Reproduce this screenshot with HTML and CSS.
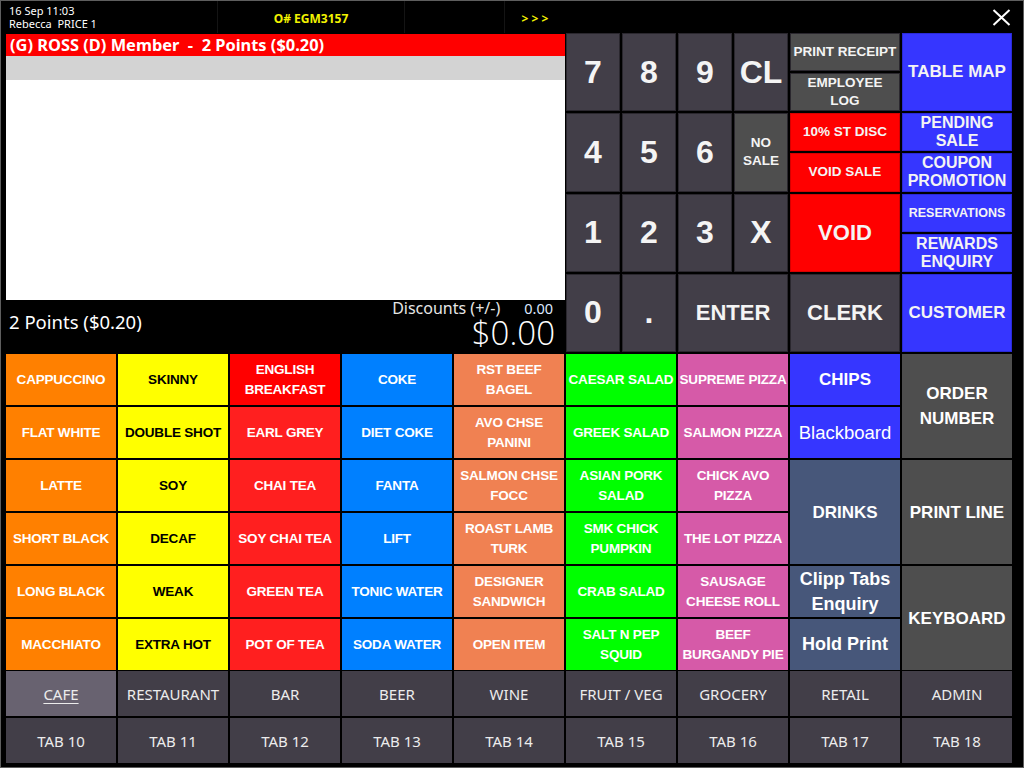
FILE: index.html
```html
<!DOCTYPE html>
<html lang="en">
<head>
  <meta charset="UTF-8">
  <meta name="viewport" content="width=device-width, initial-scale=1.0">
  <title>POS - Cafe</title>
  <link rel="stylesheet" href="styles.css">
</head>
<body>
  <div class="screen">

    <!-- status bar -->
    <div class="top">
      <div class="top-info">
        <div class="seg seg-user">
          <div>16 Sep 11:03</div>
          <div>Rebecca&nbsp; PRICE 1</div>
        </div>
        <div class="seg seg-order">O# EGM3157</div>
        <div class="seg seg-blank"></div>
        <div class="seg seg-more">&gt; &gt; &gt;</div>
      </div>
      <div class="close">
        <svg width="19" height="17" viewBox="0 0 19 17">
          <path d="M1.5 1 L17.5 16 M17.5 1 L1.5 16" stroke="#fff" stroke-width="2" fill="none"/>
        </svg>
      </div>
    </div>

    <div class="upper">
      <!-- sale panel -->
      <div class="receipt">
        <div class="member-bar">(G) ROSS (D) Member&nbsp; -&nbsp; 2 Points ($0.20)</div>
        <div class="receipt-head"></div>
        <div class="receipt-lines"></div>
        <div class="totals">
          <div class="points">2 Points ($0.20)</div>
          <div class="sum">
            <div class="disc"><span class="disc-label">Discounts (+/-)</span><span class="disc-val">0.00</span></div>
            <div class="total">$0.00</div>
          </div>
        </div>
      </div>

      <!-- keypad + functions -->
      <div class="keypad">
        <div class="key num tall">7</div>
        <div class="key num tall">8</div>
        <div class="key num tall">9</div>
        <div class="key num tall">CL</div>
        <div class="key grey small wide">PRINT RECEIPT</div>
        <div class="key blue big wide tall">TABLE MAP</div>
        <div class="key grey small wide">EMPLOYEE<br>LOG</div>

        <div class="key num tall">4</div>
        <div class="key num tall">5</div>
        <div class="key num tall">6</div>
        <div class="key grey small tall">NO<br>SALE</div>
        <div class="key red small wide">10% ST DISC</div>
        <div class="key blue mid wide">PENDING<br>SALE</div>
        <div class="key red small wide">VOID SALE</div>
        <div class="key blue mid wide">COUPON<br>PROMOTION</div>

        <div class="key num tall">1</div>
        <div class="key num tall">2</div>
        <div class="key num tall">3</div>
        <div class="key num tall">X</div>
        <div class="key red word wide tall">VOID</div>
        <div class="key blue tiny wide">RESERVATIONS</div>
        <div class="key blue mid wide">REWARDS<br>ENQUIRY</div>

        <div class="key num tall">0</div>
        <div class="key num tall">.</div>
        <div class="key word wide tall">ENTER</div>
        <div class="key word wide tall">CLERK</div>
        <div class="key blue big wide tall">CUSTOMER</div>
      </div>
    </div>

    <!-- product buttons -->
    <div class="products">
      <div class="btn orange">CAPPUCCINO</div>
      <div class="btn yellow">SKINNY</div>
      <div class="btn red">ENGLISH<br>BREAKFAST</div>
      <div class="btn sky">COKE</div>
      <div class="btn salmon">RST BEEF<br>BAGEL</div>
      <div class="btn green">CAESAR SALAD</div>
      <div class="btn pink">SUPREME PIZZA</div>
      <div class="btn blue large">CHIPS</div>
      <div class="btn grey large tall">ORDER<br>NUMBER</div>

      <div class="btn orange">FLAT WHITE</div>
      <div class="btn yellow">DOUBLE SHOT</div>
      <div class="btn tomato">EARL GREY</div>
      <div class="btn sky">DIET COKE</div>
      <div class="btn salmon">AVO CHSE<br>PANINI</div>
      <div class="btn green">GREEK SALAD</div>
      <div class="btn pink">SALMON PIZZA</div>
      <div class="btn blue large plain">Blackboard</div>

      <div class="btn orange">LATTE</div>
      <div class="btn yellow">SOY</div>
      <div class="btn tomato">CHAI TEA</div>
      <div class="btn sky">FANTA</div>
      <div class="btn salmon">SALMON CHSE<br>FOCC</div>
      <div class="btn green">ASIAN PORK<br>SALAD</div>
      <div class="btn pink">CHICK AVO<br>PIZZA</div>
      <div class="btn slate large tall">DRINKS</div>
      <div class="btn grey large tall">PRINT LINE</div>

      <div class="btn orange">SHORT BLACK</div>
      <div class="btn yellow">DECAF</div>
      <div class="btn tomato">SOY CHAI TEA</div>
      <div class="btn sky">LIFT</div>
      <div class="btn salmon">ROAST LAMB<br>TURK</div>
      <div class="btn green">SMK CHICK<br>PUMPKIN</div>
      <div class="btn pink">THE LOT PIZZA</div>

      <div class="btn orange">LONG BLACK</div>
      <div class="btn yellow">WEAK</div>
      <div class="btn tomato">GREEN TEA</div>
      <div class="btn sky">TONIC WATER</div>
      <div class="btn salmon">DESIGNER<br>SANDWICH</div>
      <div class="btn green">CRAB SALAD</div>
      <div class="btn pink">SAUSAGE<br>CHEESE ROLL</div>
      <div class="btn slate larger">Clipp Tabs<br>Enquiry</div>
      <div class="btn grey large tall">KEYBOARD</div>

      <div class="btn orange">MACCHIATO</div>
      <div class="btn yellow">EXTRA HOT</div>
      <div class="btn tomato">POT OF TEA</div>
      <div class="btn sky">SODA WATER</div>
      <div class="btn salmon">OPEN ITEM</div>
      <div class="btn green">SALT N PEP<br>SQUID</div>
      <div class="btn pink">BEEF<br>BURGANDY PIE</div>
      <div class="btn slate larger">Hold Print</div>
    </div>

    <!-- departments and tabs -->
    <div class="nav">
      <div class="tab active"><span>CAFE</span></div>
      <div class="tab">RESTAURANT</div>
      <div class="tab">BAR</div>
      <div class="tab">BEER</div>
      <div class="tab">WINE</div>
      <div class="tab">FRUIT / VEG</div>
      <div class="tab">GROCERY</div>
      <div class="tab">RETAIL</div>
      <div class="tab">ADMIN</div>

      <div class="tab">TAB 10</div>
      <div class="tab">TAB 11</div>
      <div class="tab">TAB 12</div>
      <div class="tab">TAB 13</div>
      <div class="tab">TAB 14</div>
      <div class="tab">TAB 15</div>
      <div class="tab">TAB 16</div>
      <div class="tab">TAB 17</div>
      <div class="tab">TAB 18</div>
    </div>

  </div>
</body>
</html>
```

FILE: styles.css
```css
html, body {
  margin: 0;
  padding: 0;
  background: #000;
}

.screen {
  width: 1024px;
  height: 768px;
  box-sizing: border-box;
  border: 1px solid #5e5e5e;
  background: #000;
  color: #fff;
  font-family: "Noto Sans", "Open Sans", sans-serif;
  overflow: hidden;
}

/* ---------- status bar ---------- */
.top {
  display: flex;
  height: 32px;
}

.top-info {
  display: flex;
  width: 564px;
}

.seg {
  box-sizing: border-box;
  height: 32px;
  border-right: 1px solid #141414;
  display: flex;
  align-items: center;
  justify-content: center;
}

.seg-user {
  width: 217px;
  flex-direction: column;
  align-items: flex-start;
  justify-content: center;
  padding-left: 8px;
  font-size: 11px;
  line-height: 13px;
}

.seg-order {
  width: 187px;
  color: #f2f200;
  font-weight: bold;
  font-size: 12px;
  padding-top: 2px;
}

.seg-blank {
  width: 100px;
}

.seg-more {
  width: 60px;
  border-right: none;
  color: #f2f200;
  font-weight: bold;
  font-size: 12px;
  padding-top: 2px;
}

.close {
  flex: 1;
  display: flex;
  justify-content: flex-end;
  align-items: center;
  padding-right: 12px;
  padding-top: 1px;
}

/* ---------- upper area ---------- */
.upper {
  display: flex;
  height: 319px;
  margin-left: 5px;
}

.receipt {
  width: 559px;
  margin-right: 1px;
  padding-top: 1px;
  display: flex;
  flex-direction: column;
}

.member-bar {
  height: 22px;
  background: #ff0000;
  font-weight: bold;
  font-size: 16.4px;
  line-height: 22px;
  padding-left: 4px;
  white-space: nowrap;
}

.receipt-head {
  height: 24px;
  background: #d3d3d3;
}

.receipt-lines {
  height: 220px;
  background: #fff;
}

.totals {
  height: 50px;
  display: flex;
  justify-content: space-between;
  align-items: center;
}

.points {
  font-size: 18.5px;
  padding-left: 3px;
  padding-bottom: 8px;
}

.sum {
  display: flex;
  flex-direction: column;
  align-items: flex-end;
  padding-right: 12px;
}

.disc {
  display: flex;
  align-items: baseline;
  font-size: 16px;
  line-height: 15px;
}

.disc-label {
  color: #e6e6e6;
  margin-right: 24px;
}

.disc-val {
  color: #dce8ff;
  font-size: 14.5px;
}

.total {
  font-family: "Open Sans", "Noto Sans", sans-serif;
  font-weight: 300;
  font-size: 33px;
  line-height: 33px;
  margin-right: -2px;
}

/* ---------- keypad ---------- */
.keypad {
  display: grid;
  grid-template-columns: repeat(8, 54px);
  grid-template-rows: repeat(8, 1fr);
  gap: 2px;
  width: 446px;
}

.key {
  display: flex;
  align-items: center;
  justify-content: center;
  text-align: center;
  background: #423e48;
  color: #f4f4f4;
  font-family: "Liberation Sans", Arial, sans-serif;
  font-weight: bold;
  box-sizing: border-box;
  border: 1px solid #2a272e;
}

.key.tall { grid-row: span 2; }
.key.wide { grid-column: span 2; }

.key.num { font-size: 32px; }
.key.word { font-size: 22px; }
.key.small { font-size: 13.5px; line-height: 18px; }
.key.tiny { font-size: 12.5px; }
.key.mid { font-size: 16px; line-height: 18px; }
.key.big { font-size: 17px; }

.key.grey { background: #4e4e4e; }
.key.red { background: #ff0000; border-color: #d80000; }
.key.blue { background: #3636ff; border-color: #2a2ad8; }

/* ---------- product buttons ---------- */
.products {
  display: grid;
  grid-template-columns: repeat(9, 110px);
  grid-template-rows: repeat(6, 51px);
  gap: 2px;
  margin: 2px 0 0 5px;
}

.btn {
  display: flex;
  align-items: center;
  justify-content: center;
  text-align: center;
  font-family: "Liberation Sans", Arial, sans-serif;
  font-weight: bold;
  font-size: 13.5px;
  letter-spacing: -0.2px;
  line-height: 20px;
  color: #fff;
  white-space: nowrap;
}

.btn.tall { grid-row: span 2; }
.btn.large { font-size: 17px; line-height: 25px; letter-spacing: 0; }
.btn.larger { font-size: 18px; line-height: 25px; letter-spacing: 0; }
.btn.plain { font-weight: normal; font-size: 18.5px; }

.orange { background: #ff8000; }
.yellow { background: #ffff00; color: #000; }
.red { background: #ff0000; }
.tomato { background: #ff1f1f; }
.sky { background: #0080ff; }
.salmon { background: #f08152; }
.green { background: #00ff00; }
.pink { background: #d65aa8; }
.blue { background: #3636ff; }
.slate { background: #47577a; }
.grey { background: #4e4e4e; }

/* ---------- departments / tabs ---------- */
.nav {
  display: grid;
  grid-template-columns: repeat(9, 110px);
  grid-template-rows: 45px 45px;
  gap: 2px;
  margin: 1px 0 0 5px;
}

.tab {
  display: flex;
  align-items: center;
  justify-content: center;
  background: #423e48;
  color: #ececec;
  font-size: 15px;
}

.tab.active {
  background: #686270;
}

.tab.active span {
  text-decoration: underline;
  text-underline-offset: 3px;
}
```
